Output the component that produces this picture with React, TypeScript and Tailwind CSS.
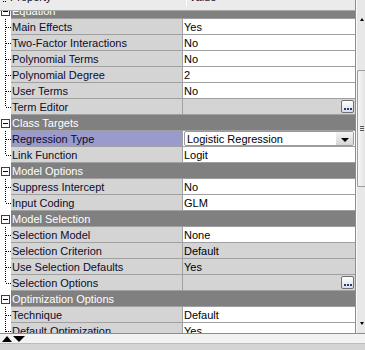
type Item =
  | { kind: 'cat'; label: string; clip?: boolean }
  | { kind: 'prop'; label: string; value?: string; last?: boolean; grey?: boolean; button?: boolean; combo?: boolean; selected?: boolean };

const items: Item[] = [
  { kind: 'cat', label: 'Equation', clip: true },
  { kind: 'prop', label: 'Main Effects', value: 'Yes' },
  { kind: 'prop', label: 'Two-Factor Interactions', value: 'No' },
  { kind: 'prop', label: 'Polynomial Terms', value: 'No' },
  { kind: 'prop', label: 'Polynomial Degree', value: '2' },
  { kind: 'prop', label: 'User Terms', value: 'No' },
  { kind: 'prop', label: 'Term Editor', grey: true, button: true, last: true },
  { kind: 'cat', label: 'Class Targets' },
  { kind: 'prop', label: 'Regression Type', value: 'Logistic Regression', combo: true, selected: true },
  { kind: 'prop', label: 'Link Function', value: 'Logit', last: true },
  { kind: 'cat', label: 'Model Options' },
  { kind: 'prop', label: 'Suppress Intercept', value: 'No' },
  { kind: 'prop', label: 'Input Coding', value: 'GLM', last: true },
  { kind: 'cat', label: 'Model Selection' },
  { kind: 'prop', label: 'Selection Model', value: 'None' },
  { kind: 'prop', label: 'Selection Criterion', value: 'Default', grey: true },
  { kind: 'prop', label: 'Use Selection Defaults', value: 'Yes', grey: true },
  { kind: 'prop', label: 'Selection Options', grey: true, button: true, last: true },
  { kind: 'cat', label: 'Optimization Options' },
  { kind: 'prop', label: 'Technique', value: 'Default' },
  { kind: 'prop', label: 'Default Optimization', value: 'Yes' },
];

function Tree({ last }: { last?: boolean }) {
  return (
    <svg width="11" height="16" className="shrink-0 bg-white">
      <line x1="5.5" y1="0" x2="5.5" y2={last ? 8 : 16} stroke="#000" strokeDasharray="1 1" />
      <line x1="6" y1="8.5" x2="11" y2="8.5" stroke="#000" strokeDasharray="1 1" />
    </svg>
  );
}

function EllipsisButton() {
  return (
    <span className="ml-auto mr-[1px] mt-[1px] flex h-[13px] w-[13px] items-end justify-center gap-[1px] rounded-[2px] border border-[#707070] bg-gradient-to-b from-white to-[#dedede] pb-[2px]">
      <span className="h-[2px] w-[2px] bg-[#1c3c8c]" />
      <span className="h-[2px] w-[2px] bg-[#1c3c8c]" />
      <span className="h-[2px] w-[2px] bg-[#1c3c8c]" />
    </span>
  );
}

function Combo({ value }: { value: string }) {
  return (
    <div className="mx-[1px] flex h-[15px] flex-1 items-stretch rounded-[2px] border border-[#9a9a9a] bg-white">
      <span className="flex-1 pl-[2px] pt-[1px] leading-[12px]">{value}</span>
      <span className="flex w-[17px] items-center justify-center rounded-[1px] bg-gradient-to-b from-[#f4f4f4] to-[#d6d6d6] pt-[3px]">
        <span className="h-0 w-0 border-x-[4px] border-t-[4px] border-x-transparent border-t-black" />
      </span>
    </div>
  );
}

function CatRow({ label }: { label: string }) {
  return (
    <div className="flex h-[16px] shrink-0">
      <div className="flex w-[11px] shrink-0 items-center bg-white">
        <span className="ml-[1px] flex h-[9px] w-[9px] items-center justify-center border border-[#3c3c3c] bg-white">
          <span className="h-[1px] w-[5px] bg-black" />
        </span>
      </div>
      <div className="flex-1 border-b border-[#a0a0a0] bg-[#808080] pl-[1px] pt-[1px] leading-[14px] text-white">{label}</div>
    </div>
  );
}

function PropRow({ item }: { item: Extract<Item, { kind: 'prop' }> }) {
  return (
    <div className="flex h-[16px] shrink-0">
      <Tree last={item.last} />
      <div
        className={`w-[172px] shrink-0 overflow-hidden whitespace-nowrap border-b border-r border-[#a0a0a0] pl-[1px] pt-[1px] leading-[14px] text-[#0c0c2c] ${
          item.selected ? 'bg-[#9a9acc]' : 'bg-[#d4d4d4]'
        }`}
      >
        {item.label}
      </div>
      <div
        className={`flex w-[172px] shrink-0 items-stretch overflow-hidden whitespace-nowrap border-b border-[#a0a0a0] text-black ${
          item.grey ? 'bg-[#d4d4d4]' : 'bg-white'
        }`}
      >
        {item.combo ? (
          <Combo value={item.value ?? ''} />
        ) : (
          <span className="pl-[1px] pt-[1px] leading-[14px]">{item.value}</span>
        )}
        {item.button && <EllipsisButton />}
      </div>
    </div>
  );
}

export default function App() {
  return (
    <div
      className="flex h-[350px] w-[365px] flex-col overflow-hidden bg-[#d4d4d4] text-[11px]"
      style={{ fontFamily: '"Liberation Sans", Arial, sans-serif' }}
    >
      <div className="flex h-[333px] shrink-0">
        <div className="flex w-[356px] shrink-0 flex-col overflow-hidden border-r border-[#8c8c8c] bg-white">
          {/* header, scrolled so only its lower edge shows */}
          <div className="flex h-[11px] shrink-0 overflow-hidden border-b border-[#a8a8a8] bg-[#ebebeb] text-[#0c0c2c]">
            <div className="-mt-[12px] flex h-[18px] w-full items-center">
              <span className="ml-[3px] mr-[3px] flex w-[4px] self-end pb-[4px]">
                <span className="flex gap-[1px]">
                  <span className="h-[1px] w-[1px] bg-black" />
                  <span className="h-[1px] w-[1px] bg-black" />
                </span>
              </span>
              <span className="w-[175px]">Property</span>
              <span className="ml-[1px] h-full border-l border-white pl-[2px] leading-[18px]">Value</span>
            </div>
          </div>
          {items.map((item, i) => {
            if (item.kind === 'cat') {
              if (item.clip) {
                return (
                  <div key={i} className="h-[8px] shrink-0 overflow-hidden">
                    <div className="-mt-[8px]">
                      <CatRow label={item.label} />
                    </div>
                  </div>
                );
              }
              return <CatRow key={i} label={item.label} />;
            }
            return <PropRow key={i} item={item} />;
          })}
        </div>
        {/* vertical scrollbar */}
        <div className="flex w-[9px] shrink-0 flex-col border-l border-[#fafafa] bg-[#e8e8e8]">
          <div className="flex h-[22px] shrink-0 items-end justify-end pb-[1px] pr-[1px]">
            <span className="h-0 w-0 border-x-[2px] border-b-[3px] border-x-transparent border-b-black" />
          </div>
          <div className="mt-[48px] flex h-[117px] shrink-0 items-center rounded-l-[2px] border border-r-0 border-[#9c9c9c] bg-gradient-to-r from-[#f6f6f6] to-[#e4e4e4] pl-[2px]">
            <span className="flex flex-col gap-[1px]">
              <span className="h-[1px] w-[4px] bg-[#555]" />
              <span className="h-[1px] w-[4px] bg-[#555]" />
              <span className="h-[1px] w-[4px] bg-[#555]" />
            </span>
          </div>
          <div className="flex flex-1 items-end justify-end pb-[8px] pr-[1px]">
            <span className="h-0 w-0 border-x-[2px] border-t-[3px] border-x-transparent border-t-black" />
          </div>
        </div>
      </div>
      <div className="flex h-[10px] shrink-0 items-center gap-[1px] border-t border-[#8c8c8c] bg-[#f2f2f2] pl-[2px]">
        <span className="h-0 w-0 border-x-[5px] border-b-[6px] border-x-transparent border-b-black" />
        <span className="h-0 w-0 border-x-[6px] border-t-[6px] border-x-transparent border-t-black" />
      </div>
      <div className="h-[7px] shrink-0 border-t border-[#bcbcbc] bg-[#d4d4d4]" />
    </div>
  );
}
